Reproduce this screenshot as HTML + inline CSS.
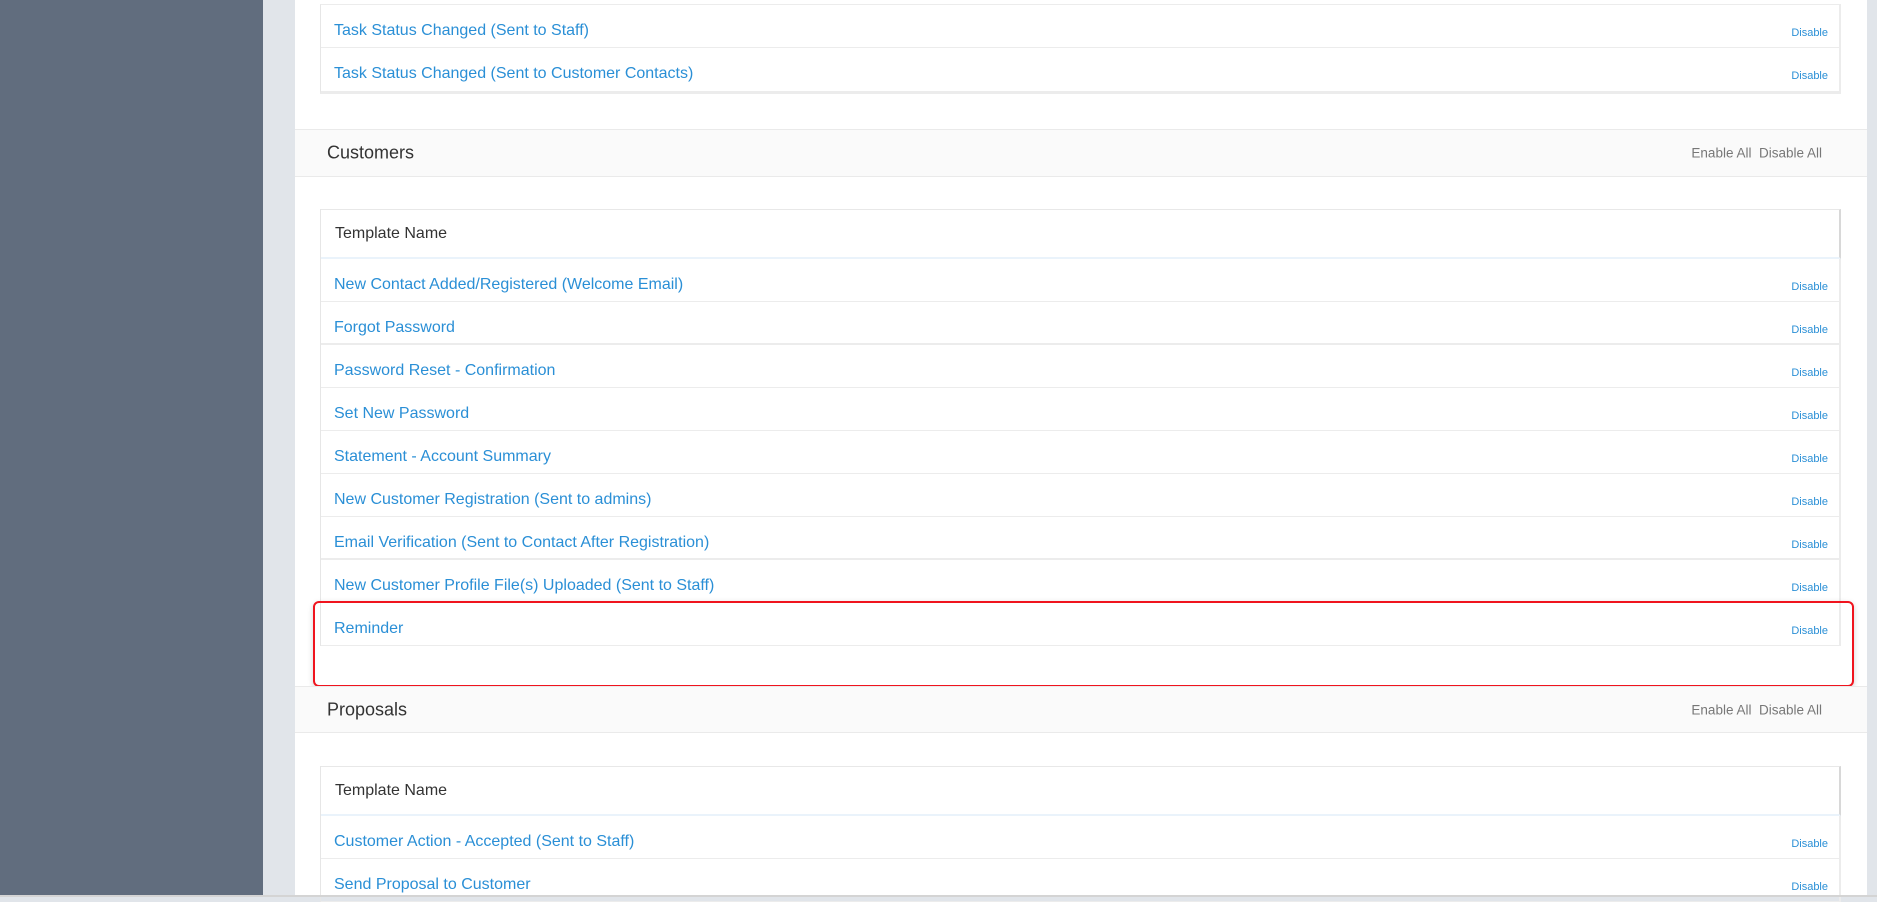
<!DOCTYPE html>
<html><head><meta charset="utf-8"><style>
*{margin:0;padding:0;box-sizing:border-box}
body{width:1877px;height:897px;overflow:hidden;background:#e1e5ea;font-family:"Liberation Sans",Arial,sans-serif;position:relative}
.side{position:absolute;left:0;top:0;width:263px;height:897px;background:#616d7e}
.panel{position:absolute;left:295px;top:0;width:1572px;height:897px;background:#fff}
.abs{position:absolute}
.band{position:absolute;left:295px;width:1572px;background:#fafafa;border-top:1px solid #eaeaea;border-bottom:1px solid #eaeaea}
.band .t{position:absolute;left:32px;top:50%;transform:translateY(-50%);font-size:18px;color:#333}
.band .a{position:absolute;right:45px;top:50%;transform:translateY(-50%);font-size:13.5px;color:#777;word-spacing:0}
.tbl{position:absolute;left:320px;width:1521px;border-left:1px solid #e6e6e6;border-right:2px solid #ececec}
.hd{height:50px;border-top:1px solid #e8e8e8;border-bottom:2px solid #eaf3fb;position:relative;border-right:2px solid #d8d8d8;margin-right:-2px}
.hd span{position:absolute;left:14px;top:15px;font-size:16px;color:#333}
.row{height:43px;border-bottom:1px solid #ececec;position:relative}
.row .n{position:absolute;left:13px;top:17px;font-size:16px;color:#2a8fd6}
.row .d{position:absolute;right:11px;top:22px;font-size:11px;color:#2a8fd6}
</style></head><body>
<div class="side"></div>
<div class="panel"></div>

<div class="tbl" style="top:4px;border-top:1px solid #ececec;border-bottom:3px solid #ececec">
<div class="row"><span class="n">Task Status Changed (Sent to Staff)</span><span class="d">Disable</span></div>
<div class="row" style="border-bottom:none"><span class="n">Task Status Changed (Sent to Customer Contacts)</span><span class="d">Disable</span></div>
</div>

<div class="band" style="top:129px;height:48px"><span class="t">Customers</span><span class="a">Enable All&nbsp; Disable All</span></div>

<div class="tbl" style="top:209px">
<div class="hd"><span>Template Name</span></div>
<div class="row"><span class="n">New Contact Added/Registered (Welcome Email)</span><span class="d">Disable</span></div>
<div class="row" style="border-bottom:2px solid #ececec"><span class="n">Forgot Password</span><span class="d">Disable</span></div>
<div class="row"><span class="n">Password Reset - Confirmation</span><span class="d">Disable</span></div>
<div class="row"><span class="n">Set New Password</span><span class="d">Disable</span></div>
<div class="row"><span class="n">Statement - Account Summary</span><span class="d">Disable</span></div>
<div class="row"><span class="n">New Customer Registration (Sent to admins)</span><span class="d">Disable</span></div>
<div class="row" style="border-bottom:2px solid #ececec"><span class="n">Email Verification (Sent to Contact After Registration)</span><span class="d">Disable</span></div>
<div class="row"><span class="n">New Customer Profile File(s) Uploaded (Sent to Staff)</span><span class="d">Disable</span></div>
<div class="row"><span class="n">Reminder</span><span class="d">Disable</span></div>
</div>

<div class="abs" style="left:313px;top:601px;width:1541px;height:86px;border:2px solid #f0141e;border-radius:6px;box-shadow:0 2px 6px rgba(0,0,0,.18)"></div>

<div class="band" style="top:686px;height:47px"><span class="t">Proposals</span><span class="a">Enable All&nbsp; Disable All</span></div>

<div class="tbl" style="top:766px">
<div class="hd"><span>Template Name</span></div>
<div class="row"><span class="n">Customer Action - Accepted (Sent to Staff)</span><span class="d">Disable</span></div>
<div class="row"><span class="n">Send Proposal to Customer</span><span class="d">Disable</span></div>
</div>
<div class="abs" style="left:0;top:895px;width:1877px;height:2px;background:#d4d4d4"></div>
</body></html>
